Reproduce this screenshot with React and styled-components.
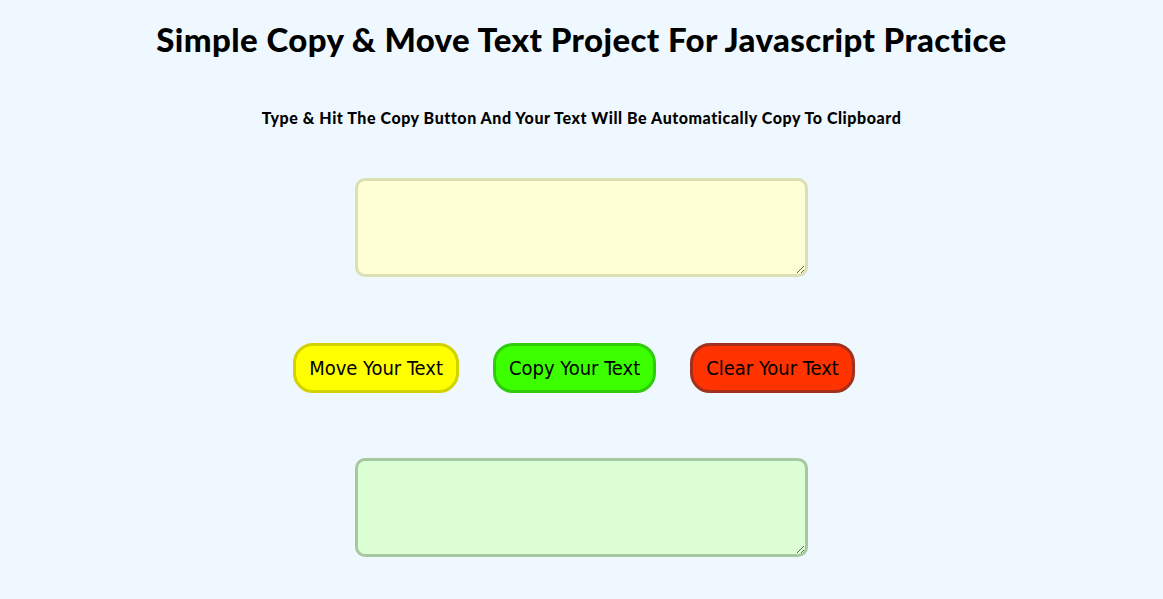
import React, { useState } from "react"
import styled, { createGlobalStyle } from "styled-components"

const GlobalStyle = createGlobalStyle`
  html, body {
    margin: 0;
    padding: 0;
    background: #f0f8ff;
  }
  * {
    box-sizing: border-box;
  }
`

const Page = styled.div`
  display: flex;
  flex-direction: column;
  align-items: center;
  min-height: 599px;
  padding-top: 20px;
  font-family: "Lato", "Liberation Sans", sans-serif;
`

const Title = styled.h1`
  margin: 0;
  font-size: 33px;
  font-weight: 900;
  line-height: 38px;
  letter-spacing: 0.4px;
  color: #000;
`

const Subtitle = styled.h4`
  margin: 50px 0 0;
  font-size: 16px;
  font-weight: 900;
  line-height: 19px;
  letter-spacing: 0.55px;
  color: #000;
`

const Area = styled.textarea`
  width: 453px;
  height: 99px;
  margin-top: ${p => p.$top}px;
  border: 3px solid ${p => p.$border};
  border-radius: 10px;
  background: ${p => p.$bg};
  outline: none;
  font-family: "DejaVu Sans", sans-serif;
  font-size: 16px;
  padding: 6px;
`

const Buttons = styled.div`
  display: flex;
  gap: 34px;
  margin-top: 66px;
  padding-right: 15px;
`

const Button = styled.button`
  height: 50px;
  padding: 0 13px;
  border: 3px solid ${p => p.$border};
  border-radius: 20px;
  background: ${p => p.$bg};
  color: #000;
  font-family: "DejaVu Sans Condensed", "DejaVu Sans", sans-serif;
  font-size: 20px;
  cursor: pointer;
`

export default function App() {
  const [text, setText] = useState("")
  const [moved, setMoved] = useState("")

  return (
    <>
      <GlobalStyle />
      <Page>
        <Title>Simple Copy &amp; Move Text Project For Javascript Practice</Title>
        <Subtitle>
          Type &amp; Hit The Copy Button And Your Text Will Be Automatically Copy To Clipboard
        </Subtitle>
        <Area
          $top={51}
          $bg="#ffffd5"
          $border="#dcdfb4"
          value={text}
          onChange={e => setText(e.target.value)}
        />
        <Buttons>
          <Button $bg="#ffff00" $border="#d2d200" onClick={() => setMoved(text)}>
            Move Your Text
          </Button>
          <Button
            $bg="#3cff00"
            $border="#2fcc0c"
            onClick={() => navigator.clipboard && navigator.clipboard.writeText(text)}
          >
            Copy Your Text
          </Button>
          <Button
            $bg="#ff3300"
            $border="#a3301c"
            onClick={() => {
              setText("")
              setMoved("")
            }}
          >
            Clear Your Text
          </Button>
        </Buttons>
        <Area
          $top={65}
          $bg="#dcffd5"
          $border="#a5c8a0"
          value={moved}
          onChange={e => setMoved(e.target.value)}
        />
      </Page>
    </>
  )
}
